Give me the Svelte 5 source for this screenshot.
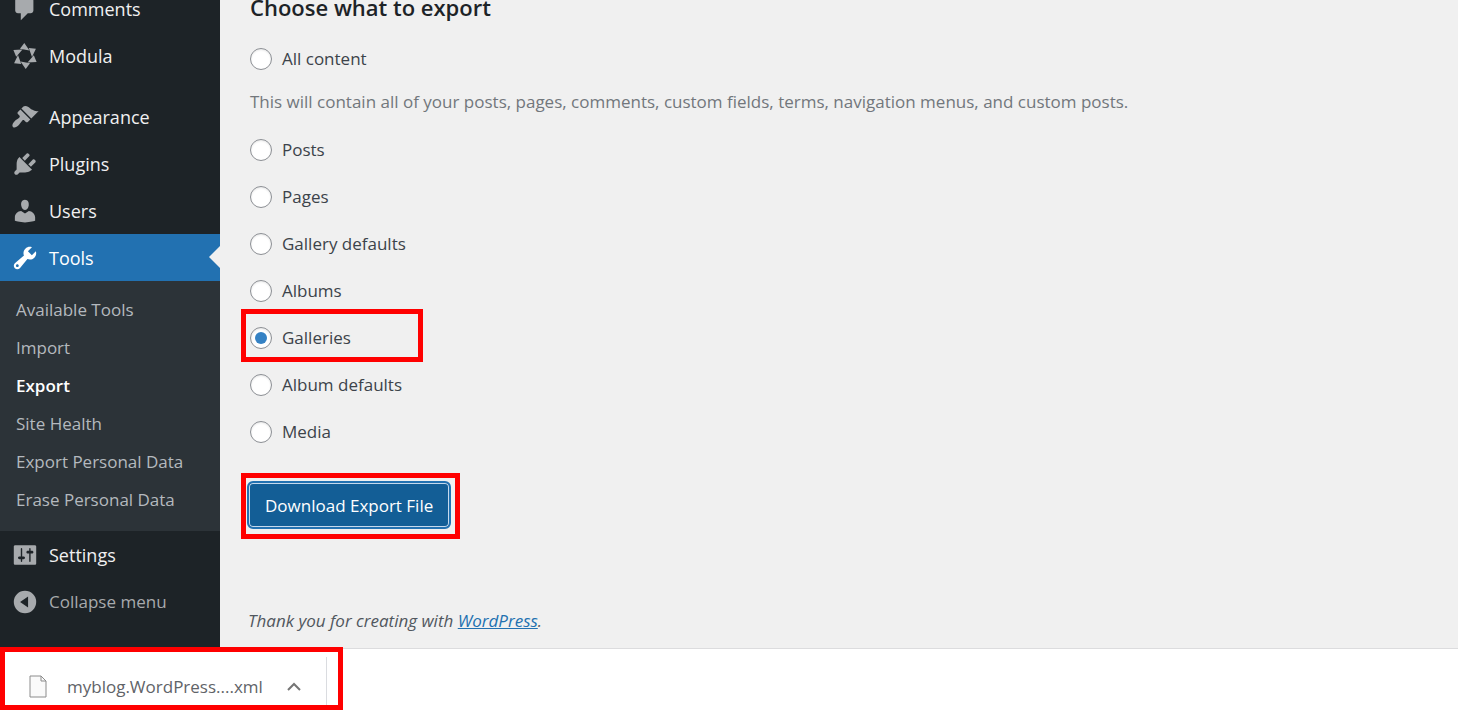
<script lang="ts">
	interface MenuItem {
		label: string;
		icon: string;
		spaced?: boolean;
		current?: boolean;
	}

	const icons: Record<string, string> = {
		comments: 'M5 2h9c1.1 0 2 .9 2 2v7c0 1.1-.9 2-2 2h-2l-5 5v-5H5c-1.1 0-2-.9-2-2V4c0-1.1.9-2 2-2z',
		modula: 'M9.5.7L13.2 6.1 6.4 4.8zM17.8 4.9L15 10.8 12.7 4.3zM18.3 14.2L11.8 14.7 16.3 9.5zM10.5 19.3L6.8 13.9 13.6 15.2zM2.2 15.1L5 9.2 7.3 15.7zM1.7 5.8L8.2 5.3 3.7 10.5z',
		appearance: 'M14.48 11.06L7.41 3.99l1.5-1.5c.5-.56 2.3-.47 3.51.32 1.21.8 1.43 1.28 2.91 2.1 1.18.64 2.45 1.26 4.45.85zm-.71.71L6.7 4.7 4.93 6.47c-.39.39-.39 1.02 0 1.41l1.06 1.06c.39.39.39 1.03 0 1.42-.6.6-1.43 1.11-2.21 1.69-.35.26-.7.53-1.01.84C1.43 14.23.4 16.08 1.4 17.07c.99 1 2.84-.03 4.18-1.36.31-.31.58-.66.85-1.02.57-.78 1.08-1.61 1.69-2.21.39-.39 1.02-.39 1.41 0l1.06 1.06c.39.39 1.02.39 1.41 0z',
		plugins: 'M13.11 4.36L9.87 7.6 8 5.73l3.24-3.24c.35-.34 1.05-.2 1.56.32.52.51.66 1.21.31 1.55zm-8 1.77l.91-1.12 9.01 9.01-1.19.84c-.71.71-2.63 1.16-3.82 1.16H6.14L4.9 17.26c-.59.59-1.54.59-2.12 0-.59-.58-.59-1.53 0-2.12l1.24-1.24v-3.88c0-1.13.4-3.19 1.09-3.89zm7.26 3.97l3.24-3.24c.34-.35 1.04-.21 1.55.31.52.51.66 1.21.31 1.55l-3.24 3.25z',
		users: 'M10 9.25c-2.27 0-2.73-3.44-2.73-3.44C7 4.02 7.82 2 9.97 2c2.16 0 2.98 2.02 2.71 3.81 0 0-.41 3.44-2.68 3.44zm0 2.57L12.72 10c2.39 0 4.52 2.33 4.52 4.53v2.49s-3.65 1.13-7.24 1.13c-3.65 0-7.24-1.13-7.24-1.13v-2.49c0-2.25 1.94-4.48 4.47-4.48z',
		tools: 'M16.68 9.77c-1.34 1.34-3.3 1.67-4.95.99l-5.41 6.52c-.99.99-2.59.99-3.58 0s-.99-2.59 0-3.57l6.52-5.42c-.68-1.65-.35-3.61.99-4.95 1.28-1.28 3.12-1.62 4.72-1.06l-2.89 2.89 2.82 2.82 2.86-2.87c.53 1.58.18 3.39-1.08 4.65zM3.81 16.21c.4.39 1.04.39 1.43 0 .4-.4.4-1.04 0-1.43-.39-.4-1.03-.4-1.43 0-.39.39-.39 1.03 0 1.43z',
		settings: 'M18 16V4c0-.55-.45-1-1-1H3c-.55 0-1 .45-1 1v12c0 .55.45 1 1 1h14c.55 0 1-.45 1-1zM8 11h1c.55 0 1 .45 1 1s-.45 1-1 1H8v1.5c0 .28-.22.5-.5.5s-.5-.22-.5-.5V13H6c-.55 0-1-.45-1-1s.45-1 1-1h1V5.5c0-.28.22-.5.5-.5s.5.22.5.5V11zm5-2h-1c-.55 0-1-.45-1-1s.45-1 1-1h1V5.5c0-.28.22-.5.5-.5s.5.22.5.5V7h1c.55 0 1 .45 1 1s-.45 1-1 1h-1v5.5c0 .28-.22.5-.5.5s-.5-.22-.5-.5V9z',
		collapse: 'M10 2a8 8 0 1 0 0 16 8 8 0 0 0 0-16zM12.2 6v8L6.5 10z'
	};

	const menu: MenuItem[] = [
		{ label: 'Comments', icon: 'comments' },
		{ label: 'Modula', icon: 'modula' },
		{ label: 'Appearance', icon: 'appearance', spaced: true },
		{ label: 'Plugins', icon: 'plugins' },
		{ label: 'Users', icon: 'users' },
		{ label: 'Tools', icon: 'tools', current: true },
		{ label: 'Settings', icon: 'settings' }
	];

	const submenu = [
		'Available Tools',
		'Import',
		'Export',
		'Site Health',
		'Export Personal Data',
		'Erase Personal Data'
	];

	const postTypes = [
		'Posts',
		'Pages',
		'Gallery defaults',
		'Albums',
		'Galleries',
		'Album defaults',
		'Media'
	];

	let content = $state('Galleries');
</script>

{#snippet icon(name: string)}
	<svg class="icon" viewBox="0 0 20 20" aria-hidden="true">
		<path d={icons[name]} fill="currentColor" fill-rule="evenodd" />
	</svg>
{/snippet}

<div class="viewport">
	<div class="admin">
		<nav class="sidebar">
			<ul>
				{#each menu as item (item.label)}
					<li class:spaced={item.spaced}>
						<a href="#{item.icon}" class="menu-item" class:current={item.current}>
							{@render icon(item.icon)}
							<span>{item.label}</span>
						</a>
						{#if item.current}
							<ul class="submenu">
								{#each submenu as label}
									<li><a href="#tools" class:active={label === 'Export'}>{label}</a></li>
								{/each}
							</ul>
						{/if}
					</li>
				{/each}
			</ul>
			<button type="button" class="menu-item collapse">
				{@render icon('collapse')}
				<span>Collapse menu</span>
			</button>
		</nav>

		<main>
			<form onsubmit={(e) => e.preventDefault()}>
				<h2>Choose what to export</h2>
				<label class="option">
					<input type="radio" name="content" value="all" bind:group={content} />
					All content
				</label>
				<p class="description">
					This will contain all of your posts, pages, comments, custom fields, terms, navigation menus, and custom posts.
				</p>
				{#each postTypes as type}
					<label class="option" class:marked={type === 'Galleries'}>
						<input type="radio" name="content" value={type} bind:group={content} />
						{type}
					</label>
				{/each}
				<div class="submit">
					<button type="submit" class="primary">Download Export File</button>
				</div>
			</form>
			<footer>Thank you for creating with <a href="#wordpress">WordPress</a>.</footer>
		</main>
	</div>
</div>

<div class="downloads">
	<div class="download">
		<svg class="file" viewBox="0 0 18 24" aria-hidden="true">
			<path d="M1 1h11l5 5v16H1z" fill="#fafafa" stroke="#8c8c8c" />
			<path d="M12 1v5h5" fill="none" stroke="#8c8c8c" />
		</svg>
		<span class="filename">myblog.WordPress....xml</span>
		<button type="button" aria-label="Download options">
			<svg viewBox="0 0 16 10" aria-hidden="true">
				<path d="M2 8l6-6 6 6" fill="none" stroke="#757575" stroke-width="2" />
			</svg>
		</button>
	</div>
</div>

<style>
	:global(body) {
		margin: 0;
		background: #fff;
		font-family: 'Open Sans', 'Noto Sans', sans-serif;
		font-size: 17px;
		color: #3c434a;
	}

	ul {
		list-style: none;
		margin: 0;
		padding: 0;
	}

	.viewport {
		overflow: hidden;
		border-bottom: 1px solid #dcdcde;
	}

	/* page is scrolled part of the way through the first row */
	.admin {
		display: flex;
		margin-top: -15px;
		background: #f0f0f0;
	}

	.sidebar {
		flex: 0 0 220px;
		background: #1d2327;
		padding-bottom: 23px;
	}

	.menu-item {
		position: relative;
		display: flex;
		align-items: center;
		gap: 10px;
		height: 47px;
		padding-left: 11px;
		color: #f0f0f1;
		font-size: 18px;
		text-decoration: none;
	}

	.icon {
		width: 28px;
		height: 28px;
		color: #a7aaad;
	}

	.spaced { margin-top: 14px; }

	.current { background: #2271b1; color: #fff; }
	.current .icon { color: #fff; }

	.current::after {
		content: '';
		position: absolute;
		right: 0;
		top: 12px;
		border: 11px solid transparent;
		border-left-width: 0;
		border-right-color: #f0f0f0;
	}

	.submenu {
		background: #2c3338;
		padding: 10px 0 12px;
	}

	.submenu a {
		display: block;
		padding-left: 16px;
		line-height: 38px;
		color: #b4b9be;
		text-decoration: none;
	}

	.submenu .active { color: #fff; font-weight: 600; }

	.collapse {
		width: 100%;
		border: 0;
		background: none;
		font-family: inherit;
		font-size: 17px;
		color: #a7aaad;
	}

	main {
		flex: 1;
		padding: 6px 30px 0;
	}

	h2 {
		margin: 0 0 12px;
		font-size: 22px;
		font-weight: 600;
		line-height: 32px;
		color: #1d2327;
	}

	.option {
		position: relative;
		display: flex;
		align-items: center;
		gap: 10px;
		width: fit-content;
		height: 47px;
	}

	.option input {
		appearance: none;
		display: grid;
		place-items: center;
		width: 22px;
		height: 22px;
		margin: 0;
		border: 1px solid #8c8f94;
		border-radius: 50%;
		background: #fff;
		box-shadow: inset 0 1px 2px rgba(0, 0, 0, 0.1);
	}

	.option input:checked::before {
		content: '';
		width: 12px;
		height: 12px;
		border-radius: 50%;
		background: #3582c4;
	}

	.description {
		margin: 0 0 4px;
		line-height: 40px;
		color: #72777c;
	}

	/* red highlight frames */
	.marked::after,
	.submit::after {
		content: '';
		position: absolute;
		border: 5px solid #f00;
		pointer-events: none;
	}

	.marked::after {
		top: -5px;
		left: -9px;
		width: 172px;
		height: 43px;
	}

	.submit {
		position: relative;
		width: fit-content;
		margin: 26px 0 0 -3px;
	}

	.submit::after {
		inset: -8px -9px -10px -6px;
	}

	.primary {
		display: block;
		height: 48px;
		padding: 0 16px;
		border: 2px solid #2271b1;
		border-radius: 6px;
		background: #135e96;
		box-shadow: inset 0 0 0 1px #c5d9ed;
		font-family: inherit;
		font-size: 17px;
		color: #fff;
	}

	footer {
		margin: 80px 0 0 -2px;
		line-height: 24px;
		font-style: italic;
		color: #50575e;
	}

	footer a { color: #2271b1; }

	.downloads {
		display: flex;
		position: relative;
		margin-top: -2px;
	}

	.download {
		display: flex;
		align-items: center;
		box-sizing: border-box;
		width: 343px;
		height: 63px;
		padding: 16px 0 0 24px;
		border: 5px solid #f00;
		background: linear-gradient(#dadce0, #dadce0) 321px 5px / 1px 100% no-repeat #fff;
	}

	.file { width: 18px; height: 24px; }

	.filename {
		margin-left: 20px;
		color: #5f6368;
	}

	.download button {
		display: flex;
		margin-left: 23px;
		padding: 0;
		border: 0;
		background: none;
	}

	.download button svg { width: 16px; height: 10px; }
</style>
